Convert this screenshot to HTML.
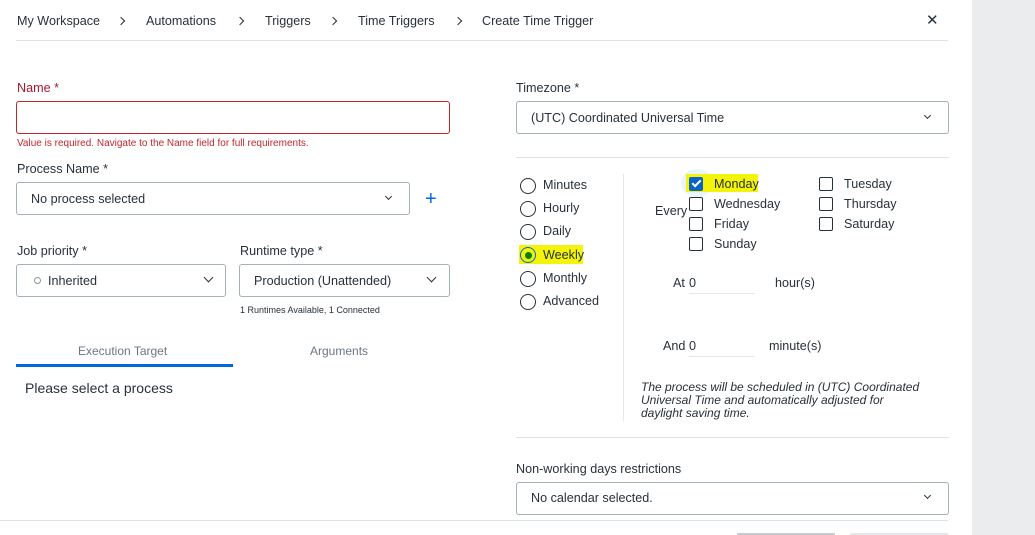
<!DOCTYPE html>
<html><head><meta charset="utf-8"><style>
*{box-sizing:border-box;margin:0;padding:0}
body{width:1035px;height:535px;overflow:hidden;background:#fff;font-family:"Liberation Sans",sans-serif;color:#273139;position:relative;font-size:12.6px}
.a{position:absolute;white-space:nowrap}
.box{position:absolute;border:1px solid #a4b1b8;border-radius:3px;background:#fff}
.chev{position:absolute;width:7px;height:7px;border-right:1.5px solid #273139;border-bottom:1.5px solid #273139;transform:rotate(45deg)}
.bc{position:absolute;width:6px;height:6px;border-right:1.3px solid #273139;border-top:1.3px solid #273139;transform:rotate(45deg)}
.rad{position:absolute;width:16px;height:16px;border:1.5px solid #273139;border-radius:50%}
.cb{position:absolute;width:14px;height:14px;border:1.5px solid #273139;border-radius:2px}
.hl{background:#f4f40a}
</style></head><body>
<div class="a" style="left:972px;top:0;width:63px;height:535px;background:#ebecee"></div>
<div class="a" style="left:17px;top:14px">My Workspace</div>
<div class="bc" style="left:118px;top:18px"></div>
<div class="a" style="left:146px;top:14px">Automations</div>
<div class="bc" style="left:237px;top:18px"></div>
<div class="a" style="left:265px;top:14px">Triggers</div>
<div class="bc" style="left:330px;top:18px"></div>
<div class="a" style="left:358px;top:14px">Time Triggers</div>
<div class="bc" style="left:455px;top:18px"></div>
<div class="a" style="left:482px;top:14px">Create Time Trigger</div>
<div class="a" style="left:926px;top:11px;font-size:15px">✕</div>
<div class="a" style="left:16px;top:40px;width:932px;height:1px;background:#dde2e5"></div>

<div class="a" style="left:17px;top:81px;color:#a6192e">Name *</div>
<div class="box" style="left:16px;top:101px;width:434px;height:33px;border-color:#c0272d"></div>
<div class="a" style="left:17px;top:138px;font-size:10px;color:#c0272d">Value is required. Navigate to the Name field for full requirements.</div>
<div class="a" style="left:17px;top:162px">Process Name *</div>
<div class="box" style="left:16px;top:182px;width:394px;height:33px"></div>
<div class="a" style="left:31px;top:192px">No process selected</div>
<div class="chev" style="left:386px;top:194px;width:5px;height:5px;border-width:1px"></div>
<div class="a" style="left:425px;top:188px;font-size:20px;color:#0067df">+</div>

<div class="a" style="left:17px;top:244px">Job priority *</div>
<div class="box" style="left:16px;top:264px;width:210px;height:33px"></div>
<div class="a" style="left:34px;top:277px;width:7px;height:7px;border:1px solid #8a969c;border-radius:50%"></div>
<div class="a" style="left:48px;top:274px">Inherited</div>
<div class="chev" style="left:205px;top:274px"></div>
<div class="a" style="left:240px;top:244px">Runtime type *</div>
<div class="box" style="left:239px;top:264px;width:211px;height:33px"></div>
<div class="a" style="left:254px;top:274px">Production (Unattended)</div>
<div class="chev" style="left:428px;top:274px"></div>
<div class="a" style="left:240px;top:305px;font-size:9px">1 Runtimes Available, 1 Connected</div>

<div class="a" style="left:78px;top:344px;color:#6b7780;font-size:12px">Execution Target</div>
<div class="a" style="left:310px;top:344px;color:#6b7780;font-size:12px">Arguments</div>
<div class="a" style="left:16px;top:364px;width:217px;height:3px;background:#0067df"></div>
<div class="a" style="left:25px;top:380px;font-size:14px">Please select a process</div>

<div class="a" style="left:516px;top:81px">Timezone *</div>
<div class="box" style="left:516px;top:101px;width:433px;height:33px"></div>
<div class="a" style="left:531px;top:111px">(UTC) Coordinated Universal Time</div>
<div class="chev" style="left:925px;top:113px;width:5px;height:5px;border-width:1px"></div>
<div class="a" style="left:516px;top:157px;width:433px;height:1px;background:#dde2e5"></div>

<div class="rad" style="left:520px;top:178px"></div><div class="a" style="left:543px;top:178px">Minutes</div>
<div class="rad" style="left:520px;top:201px"></div><div class="a" style="left:543px;top:201px">Hourly</div>
<div class="rad" style="left:520px;top:224px"></div><div class="a" style="left:543px;top:224px">Daily</div>
<div class="a hl" style="left:519px;top:245px;width:64px;height:19px"></div>
<div class="rad" style="left:520px;top:247px;border-color:#0067df"></div><div class="a" style="left:524.5px;top:251.5px;width:7px;height:7px;border-radius:50%;background:#038108"></div><div class="a" style="left:543px;top:248px">Weekly</div>
<div class="rad" style="left:520px;top:271px"></div><div class="a" style="left:543px;top:271px">Monthly</div>
<div class="rad" style="left:520px;top:294px"></div><div class="a" style="left:543px;top:294px">Advanced</div>
<div class="a" style="left:623px;top:174px;width:1px;height:247px;background:#e4e8ea"></div>

<div class="a" style="left:655px;top:204px">Every</div>
<div class="a" style="left:681px;top:169px;width:32px;height:28px;border-radius:50%;background:rgba(0,103,223,.08)"></div>
<div class="a hl" style="left:686px;top:174px;width:72px;height:18px"></div>
<div class="a" style="left:689px;top:177px;width:14px;height:14px;background:#0b62c9;border-radius:2px"></div>
<div class="a" style="left:693.5px;top:178px;width:5px;height:9px;border-right:2px solid #fff;border-bottom:2px solid #fff;transform:rotate(45deg)"></div>
<div class="a" style="left:714px;top:177px">Monday</div>
<div class="cb" style="left:689px;top:197px"></div><div class="a" style="left:714px;top:197px">Wednesday</div>
<div class="cb" style="left:689px;top:217px"></div><div class="a" style="left:714px;top:217px">Friday</div>
<div class="cb" style="left:689px;top:237px"></div><div class="a" style="left:714px;top:237px">Sunday</div>
<div class="cb" style="left:819px;top:177px"></div><div class="a" style="left:844px;top:177px">Tuesday</div>
<div class="cb" style="left:819px;top:197px"></div><div class="a" style="left:844px;top:197px">Thursday</div>
<div class="cb" style="left:819px;top:217px"></div><div class="a" style="left:844px;top:217px">Saturday</div>

<div class="a" style="left:673px;top:276px">At</div>
<div class="a" style="left:689px;top:276px">0</div>
<div class="a" style="left:689px;top:293px;width:66px;height:1px;background:#e4e8ea"></div>
<div class="a" style="left:775px;top:276px">hour(s)</div>
<div class="a" style="left:663px;top:339px">And</div>
<div class="a" style="left:689px;top:339px">0</div>
<div class="a" style="left:689px;top:356px;width:66px;height:1px;background:#e4e8ea"></div>
<div class="a" style="left:769px;top:339px">minute(s)</div>
<div class="a" style="left:641px;top:381px;font-style:italic;font-size:12px;line-height:13px">The process will be scheduled in (UTC) Coordinated<br>Universal Time and automatically adjusted for<br>daylight saving time.</div>

<div class="a" style="left:516px;top:437px;width:433px;height:1px;background:#dde2e5"></div>
<div class="a" style="left:516px;top:462px">Non-working days restrictions</div>
<div class="box" style="left:516px;top:482px;width:433px;height:33px"></div>
<div class="a" style="left:531px;top:491px">No calendar selected.</div>
<div class="chev" style="left:925px;top:493px;width:5px;height:5px;border-width:1px"></div>
<div class="a" style="left:0;top:520px;width:948px;height:1px;background:#dde2e5"></div>
<div class="a" style="left:737px;top:533px;width:98px;height:2px;background:#c5cbce"></div>
<div class="a" style="left:850px;top:533px;width:98px;height:2px;background:#e4e8ea"></div>
</body></html>
